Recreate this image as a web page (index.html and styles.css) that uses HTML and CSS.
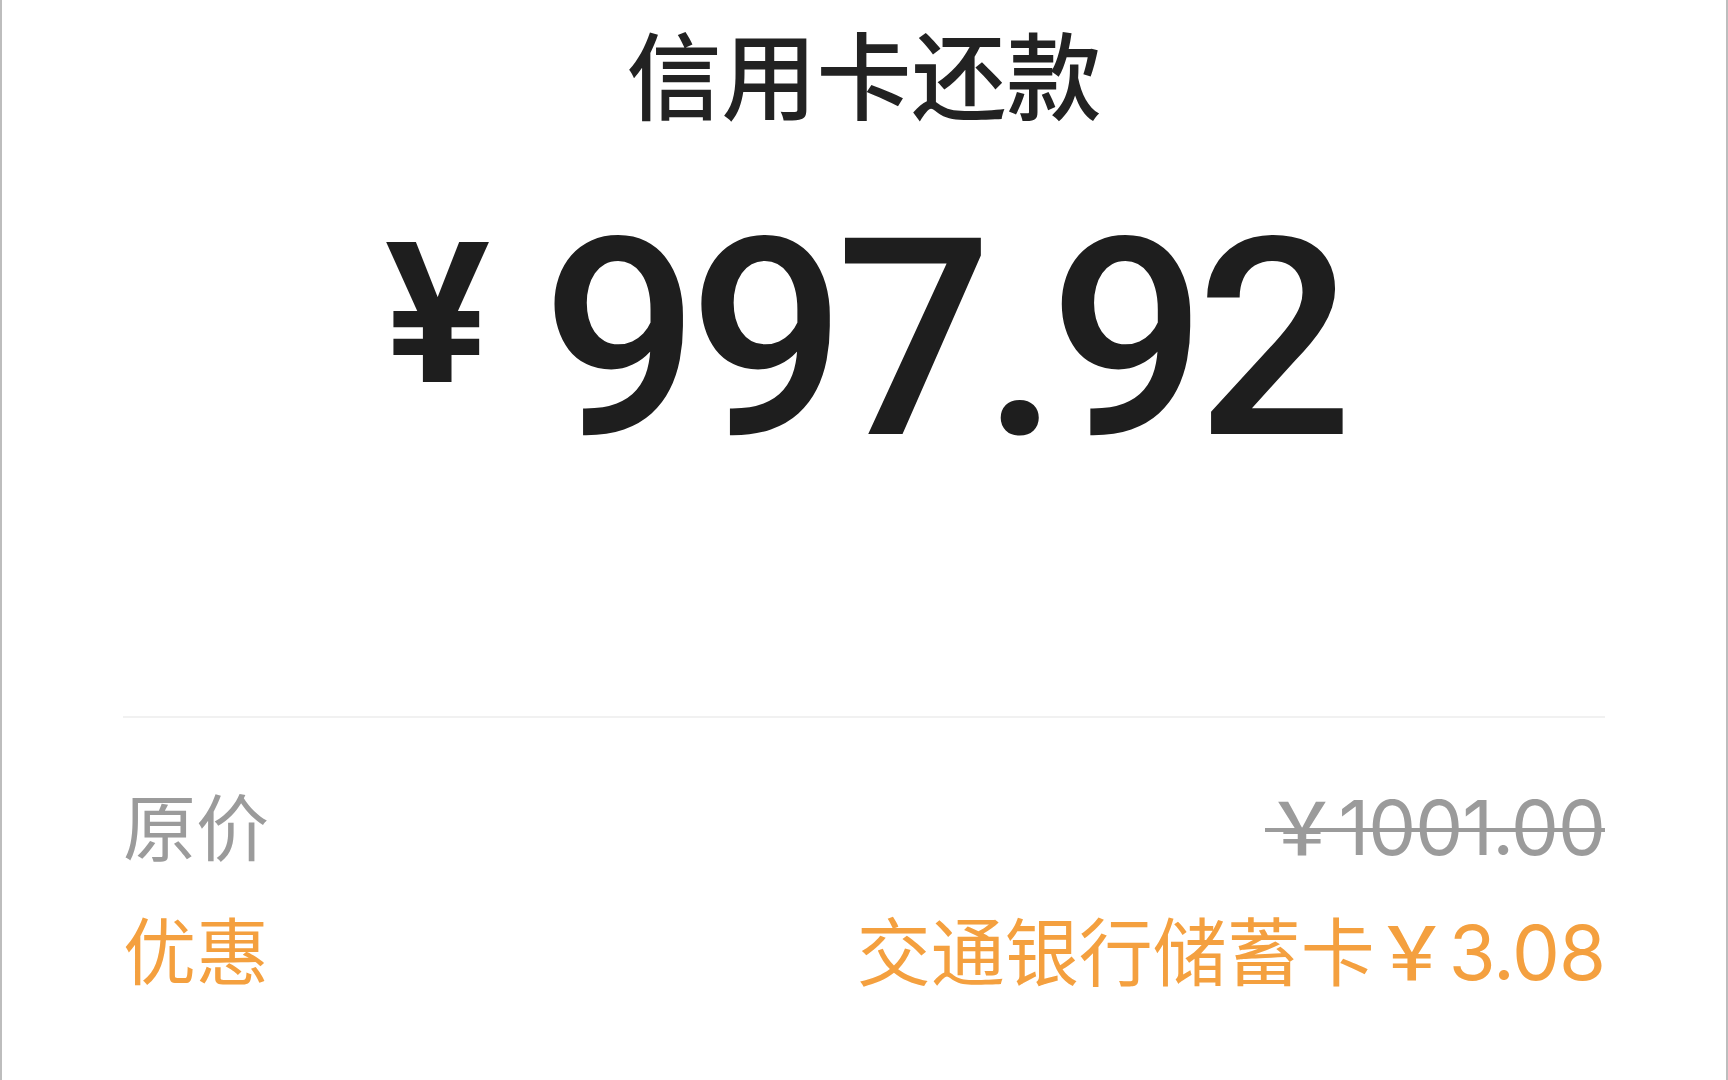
FILE: index.html
```html
<!DOCTYPE html>
<html lang="zh-CN">
<head>
<meta charset="utf-8">
<title>信用卡还款</title>
<link rel="stylesheet" href="styles.css">
</head>
<body>
<div class="screen">
  <h1 class="title">信用卡还款</h1>
  <div class="amount"><span class="currency">¥</span><span class="value">997.92</span></div>
  <div class="details">
    <div class="row">
      <span class="label label-gray">原价</span>
      <span class="price-old"><span class="yen">￥</span><span class="num">1001.00</span></span>
    </div>
    <div class="row">
      <span class="label label-orange">优惠</span>
      <span class="discount">交通银行储蓄卡<span class="yen">￥</span><span class="num">3.08</span></span>
    </div>
  </div>
</div>
</body>
</html>
```
FILE: styles.css
```css
html, body {
  margin: 0;
  padding: 0;
  background: #ffffff;
}
.screen {
  box-sizing: border-box;
  width: 1728px;
  height: 1080px;
  border-left: 2px solid #bdbdbd;
  border-right: 2px solid #bdbdbd;
  display: flex;
  flex-direction: column;
  align-items: center;
  font-family: "Noto Sans CJK SC", "Noto Sans", sans-serif;
  overflow: hidden;
}
.title {
  margin: 14px 0 0 0;
  font-size: 95px;
  line-height: 115px;
  font-weight: 500;
  color: #222222;
}
.amount {
  margin-top: 73px;
  display: flex;
  align-items: flex-start;
  color: #1e1e1e;
  font-family: Roboto, "Liberation Sans", sans-serif;
}
.currency {
  font-size: 196px;
  font-weight: 700;
  line-height: 1;
  margin-right: 52px;
  margin-top: 15px;
}
.value {
  font-size: 276px;
  font-weight: 500;
  line-height: 1;
  letter-spacing: -10px;
}
.details {
  align-self: stretch;
  margin: 238px 121px 0 121px;
  border-top: 2px solid #f1f1f1;
  padding-top: 43px;
}
.row {
  display: flex;
  justify-content: space-between;
  align-items: center;
  height: 124px;
}
.label {
  font-size: 73px;
  line-height: 1;
}
.label-gray { color: #9b9b9b; }
.label-orange { color: #f4a03f; }
.yen {
  font-family: "Noto Sans CJK SC", sans-serif;
  font-weight: 500;
}
.num {
  font-family: Inter, Roboto, "Liberation Sans", sans-serif;
  font-size: 76px;
  letter-spacing: -1px;
}
.price-old {
  position: relative;
  font-size: 73px;
  color: #9b9b9b;
}
.price-old::after {
  content: "";
  position: absolute;
  left: 0;
  right: 0;
  top: 55%;
  height: 4px;
  background: #9b9b9b;
}
.discount {
  font-size: 74px;
  color: #f4a03f;
}
```
